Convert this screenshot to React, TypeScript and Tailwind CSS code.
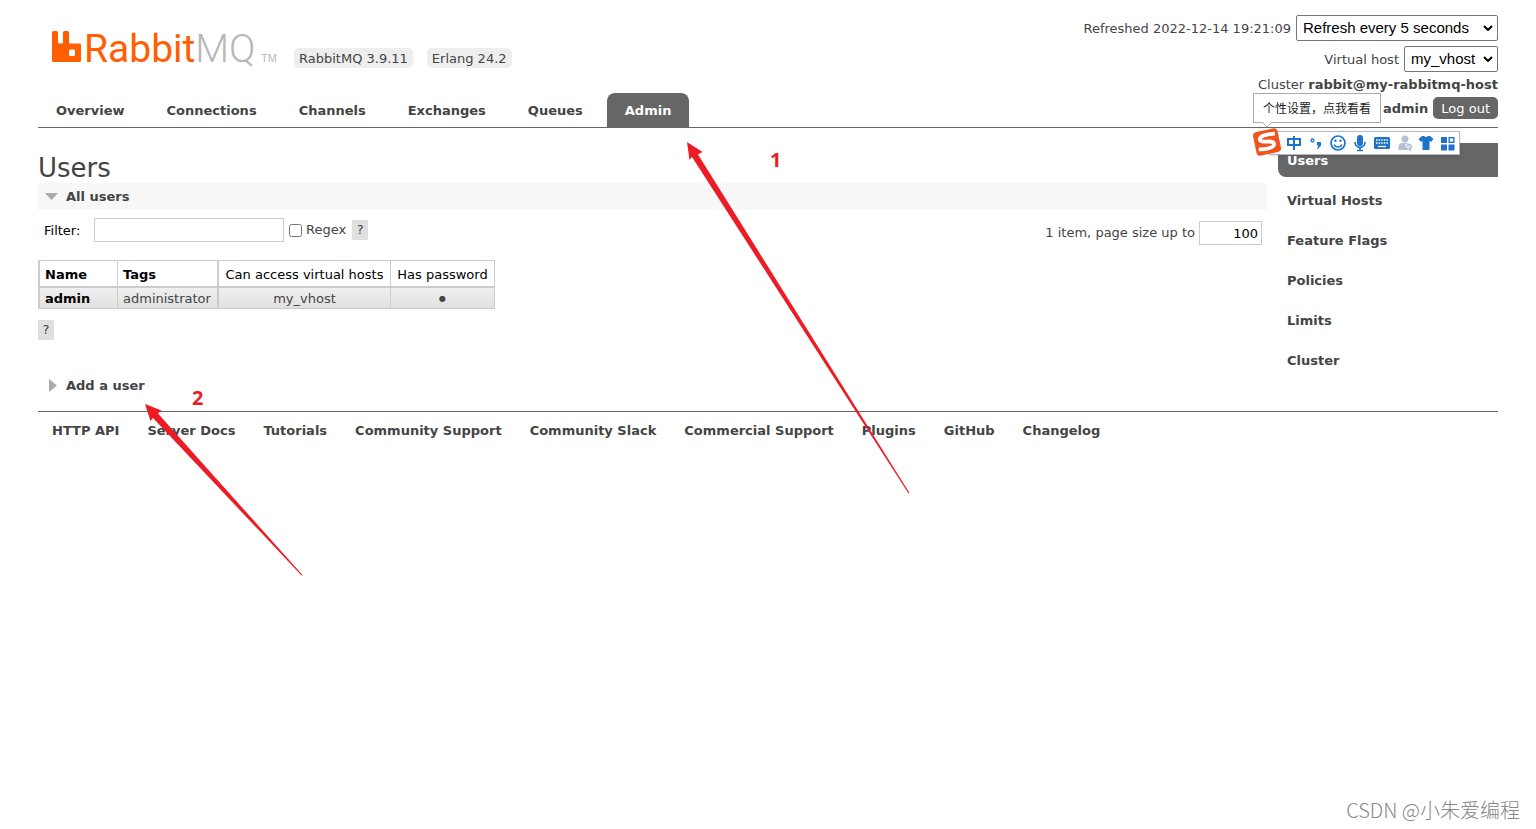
import { useState } from "react";
import type { ReactNode } from "react";

const TABS = ["Overview", "Connections", "Channels", "Exchanges", "Queues", "Admin"];
const ADMIN_PAGES = ["Users", "Virtual Hosts", "Feature Flags", "Policies", "Limits", "Cluster"];
const FOOTER_LINKS = [
  "HTTP API",
  "Server Docs",
  "Tutorials",
  "Community Support",
  "Community Slack",
  "Commercial Support",
  "Plugins",
  "GitHub",
  "Changelog",
];

function Logo() {
  return (
    <a href="#/" aria-label="RabbitMQ" className="ml-[14px] block">
      <svg width="226" height="50" viewBox="0 0 226 50">
        <path
          fill="#ff5f00"
          d="M1.500 10H4.500Q6 10 6 11.500V21Q6 22.500 7.500 22.500H9.500Q11 22.500 11 21V11.500Q11 10 12.500 10H15.500Q17 10 17 11.500V21Q17 22.500 18.500 22.500H27.500Q29 22.500 29 24V39.500Q29 41 27.500 41H1.500Q0 41 0 39.500V11.500Q0 10 1.500 10ZM18.500 28.500Q17 28.500 17 30V33.500Q17 35 18.500 35H21.500Q23 35 23 33.500V30Q23 28.500 21.500 28.500Z"
        />
        <text x="32" y="41" fontSize="39" className="font-['Roboto',sans-serif]">
          <tspan fill="#ff5f00">Rabbit</tspan>
          <tspan fill="#b7b7b7" className="font-light">
            MQ
          </tspan>
        </text>
        <text x="209" y="41" fontSize="11" fill="#b7b7b7" className="font-['Liberation_Sans',sans-serif]">
          TM
        </text>
      </svg>
    </a>
  );
}

function Version({ children }: { children: ReactNode }) {
  return <span className="h-5 rounded-[5px] bg-[#eeeeee] px-[5px] leading-[22px]">{children}</span>;
}

function Select({ id, options, className }: { id: string; options: string[]; className: string }) {
  return (
    <span className="relative">
      <select
        id={id}
        className={`block h-[26px] appearance-none rounded-[2px] border border-[#767676] bg-white pl-[6px] text-[15px] text-black font-['Liberation_Sans',sans-serif] ${className}`}
      >
        {options.map((option) => (
          <option key={option}>{option}</option>
        ))}
      </select>
      <svg width="10" height="6" viewBox="0 0 10 6" className="pointer-events-none absolute top-[10px] right-[5px]">
        <path d="M1 1l4 4 4-4" fill="none" stroke="#000" strokeWidth="2" />
      </svg>
    </span>
  );
}

function Help() {
  return (
    <button type="button" aria-label="Help" className="h-5 w-4 bg-[#e0e0e0] text-center leading-5">
      ?
    </button>
  );
}

function Header() {
  return (
    <header className="flex items-end justify-between border-b border-[#666666]">
      <div>
        <div className="flex items-end pb-[22px]">
          <Logo />
          <div className="mb-[3px] ml-4 flex gap-[14px]">
            <Version>RabbitMQ 3.9.11</Version>
            <Version>Erlang 24.2</Version>
          </div>
        </div>
        <nav className="flex gap-[6px]">
          {TABS.map((tab) => (
            <a
              key={tab}
              href="#/"
              className={`h-[34px] rounded-t-lg px-[18px] font-bold leading-[36px] ${tab === "Admin" ? "bg-[#666666] text-white" : "text-[#444444]"}`}
            >
              {tab}
            </a>
          ))}
        </nav>
      </div>
      <div className="flex flex-col items-end pt-[15px] pb-2">
        <div className="flex items-center gap-[5px]">
          <label htmlFor="refresh" className="pt-0.5">
            Refreshed 2022-12-14 19:21:09
          </label>
          <Select id="refresh" options={["Refresh every 5 seconds", "Do not refresh"]} className="w-[202px]" />
        </div>
        <div className="mt-[5px] flex items-center gap-[5px]">
          <label htmlFor="vhost" className="pt-0.5">
            Virtual host
          </label>
          <Select id="vhost" options={["my_vhost", "All"]} className="w-[94px]" />
        </div>
        <div className="leading-[25px]">
          Cluster <b>rabbit@my-rabbitmq-host</b>
        </div>
        <div className="flex items-center gap-[5px]">
          <b className="pt-0.5">admin</b>
          <button type="button" className="h-[22px] rounded-[5px] bg-[#666666] px-2 pt-0.5 text-white">
            Log out
          </button>
        </div>
      </div>
    </header>
  );
}

function Users() {
  const [filter, setFilter] = useState("");
  return (
    <main className="min-w-0 flex-1 pt-[23px]">
      <h1 className="h-8 text-[26px] leading-[34px]">Users</h1>
      <h2 className="flex h-[27px] items-center bg-[#f7f7f7] pl-[7px] font-bold">
        <svg width="13" height="7" viewBox="0 0 13 7" className="mr-2">
          <path d="M0 0h13L6.500 7z" fill="#aaaaaa" />
        </svg>
        All users
      </h2>
      <div className="mt-2 flex items-start justify-between pr-[5px] pl-[6px]">
        <div className="flex items-center">
          <label htmlFor="filter" className="w-[50px] pt-0.5 text-black">
            Filter:
          </label>
          <input
            id="filter"
            value={filter}
            onChange={(e) => setFilter(e.target.value)}
            className="h-6 w-[190px] border border-[#cccccc] px-1"
          />
          <input id="regex" type="checkbox" className="ml-[5px] size-[13px]" />
          <label htmlFor="regex" className="mr-[6px] ml-1">
            Regex
          </label>
          <Help />
        </div>
        <div className="mt-[3px] flex items-center gap-1">
          <label htmlFor="page-size">1 item, page size up to</label>
          <input
            id="page-size"
            defaultValue="100"
            className="h-6 w-[63px] border border-[#cccccc] px-[3px] text-right text-black"
          />
        </div>
      </div>
      <table className="mt-[15px] border-separate border-spacing-0 border-t border-l-2 border-[#cccccc] leading-[18px]">
        <thead className="text-black">
          <tr className="h-[27px] *:border-r *:border-b-2 *:border-[#cccccc] *:px-[5px] *:pt-0.5">
            <th className="w-[78px] text-left">Name</th>
            <th className="w-[101px] border-r-2! text-left">Tags</th>
            <th className="w-[172px] font-normal">Can access virtual hosts</th>
            <th className="w-[104px] font-normal">Has password</th>
          </tr>
        </thead>
        <tbody>
          <tr className="h-[21px] bg-linear-to-b from-[#f0f0f0] to-[#e0e0e0] *:border-r *:border-b *:border-[#cccccc] *:px-[5px] *:pt-0.5">
            <td>
              <a href="#/" className="font-bold text-black">
                admin
              </a>
            </td>
            <td className="border-r-2!">administrator</td>
            <td className="text-center">my_vhost</td>
            <td className="text-center text-[8px]">●</td>
          </tr>
        </tbody>
      </table>
      <div className="mt-[11px] flex">
        <Help />
      </div>
      <h2 className="mt-8 flex h-[27px] items-center pl-[11px] font-bold">
        <svg width="8" height="13" viewBox="0 0 8 13" className="mr-[9px]">
          <path d="M0 0v13L8 6.500z" fill="#aaaaaa" />
        </svg>
        Add a user
      </h2>
    </main>
  );
}

function Sidebar() {
  return (
    <nav className="flex w-[220px] shrink-0 flex-col gap-[6px] pt-[15px]">
      {ADMIN_PAGES.map((page) => (
        <a
          key={page}
          href="#/"
          className={`h-[34px] rounded-l-lg px-[9px] font-bold leading-[36px] ${page === "Users" ? "bg-[#666666] text-white" : ""}`}
        >
          {page}
        </a>
      ))}
    </nav>
  );
}

// Input method toolbar floating over the page
function InputToolbar() {
  return (
    <div className="absolute top-[93px] right-[76px] w-[207px] font-['Noto_Sans_CJK_SC',sans-serif]">
      <div className="h-[30px] w-32 border border-[#a4abb5] bg-white text-center text-[12px] leading-[28px] text-[#222222]">
        个性设置，点我看看
      </div>
      <div className="mt-2 ml-4 h-[24px] border border-[#b3b8c4] bg-white shadow-sm" />
      <svg width="208" height="64" viewBox="0 0 208 64" className="absolute top-0 left-0">
        <path d="M9 29l5 5 5-5" fill="#fff" stroke="#a4abb5" />
        <g transform="rotate(-12 14 49)">
          <rect x="1.500" y="37" width="25" height="24" rx="4" fill="#f0531c" />
          <path
            d="M23.500 42.500C18 41.500 7.500 41 7.500 45.300 7.500 49.500 20.500 47.500 20.500 52 20.500 56.500 10 56 4.500 54.500"
            fill="none"
            stroke="#fff"
            strokeWidth="3.8"
          />
        </g>
        <g fill="none" stroke="#1f74c9" strokeWidth="2">
          <path d="M35 46h12v6H35zM41 43v14" />
          <circle cx="59.500" cy="47.500" r="1.500" strokeWidth="1.300" />
          <circle cx="85" cy="50" r="7" strokeWidth="1.700" />
          <path d="M81 51.500c1.500 3.300 6.500 3.300 8 0" strokeWidth="1.500" />
          <path d="M102 49c0 7 10 7 10 0M107 54v4M104 57.500h6" strokeWidth="1.700" />
        </g>
        <g fill="#1f74c9">
          <path d="M64 49h4v3.500L65 56h-1l1.500-3.500H64z" />
          <circle cx="82.500" cy="47.800" r="1.200" />
          <circle cx="87.500" cy="47.800" r="1.200" />
          <rect x="104" y="42" width="6" height="11" rx="3" />
          <rect x="121" y="44" width="16" height="12" rx="1.500" />
          <path d="M169 43h2q2 2 4 0h2l3.500 3-2.500 3-1.500-1v9h-7v-9l-1.500 1-2.500-3z" />
          <path d="M188 44h6v6h-6zM188 51.500h6v6h-6zM195.500 51.500h6v6h-6z" />
        </g>
        <path d="M123 47h12M123 50h12" stroke="#fff" strokeWidth="1.500" strokeDasharray="1.500 1.100" />
        <path d="M125 53.500h8" stroke="#fff" strokeWidth="1.300" />
        <rect x="196.200" y="44.700" width="4.600" height="4.600" fill="#fff" stroke="#1f74c9" strokeWidth="1.400" />
        <g fill="#b4bfd3">
          <circle cx="152" cy="46" r="3.500" />
          <path d="M145.500 57v-3q0-4 4-4h5q4 0 4 4v3z" />
        </g>
        <path d="M153 53.500q3-2.500 5 0t-2 4" fill="none" stroke="#fff" strokeWidth="4" />
        <path d="M153.500 53c3.500-2.500 6.500 0 3.500 2.500v2.500" fill="none" stroke="#b4bfd3" strokeWidth="1.800" />
      </svg>
    </div>
  );
}

// Hand-drawn arrows and step numbers on top of the page
function Annotations() {
  return (
    <div className="pointer-events-none absolute top-0 left-0 text-[20px] leading-6 font-bold text-[#ed1c24] font-['Noto_Sans',sans-serif]">
      <svg width="920" height="590" viewBox="0 0 920 590" fill="#ed1c24">
        <path d="M687 142L702.500 152L698 154.500L909.500 493L908.500 493.500L692 157L689.500 160z" />
        <path d="M145 404L161.500 410.500L158 413.500L302.500 575L301.500 575.500L153 418L150.500 421z" />
      </svg>
      <span className="absolute top-[148px] left-[770px]">1</span>
      <span className="absolute top-[386px] left-[192px]">2</span>
    </div>
  );
}

export default function App() {
  return (
    <div className="relative min-h-screen overflow-hidden bg-white px-[38px] text-[13px] leading-5 text-[#444444] font-['DejaVu_Sans',sans-serif]">
      <Header />
      <div className="flex gap-[11px]">
        <Users />
        <Sidebar />
      </div>
      <footer className="mt-3 flex gap-7 border-t border-[#666666] pt-[9px] pl-[14px] font-bold">
        {FOOTER_LINKS.map((link) => (
          <a key={link} href="#/">
            {link}
          </a>
        ))}
      </footer>
      <InputToolbar />
      <Annotations />
      <div className="absolute right-4 bottom-1 text-[20px] leading-[30px] font-light text-[#888888] font-['Noto_Sans_CJK_SC',sans-serif]">
        CSDN @小朱爱编程
      </div>
    </div>
  );
}
